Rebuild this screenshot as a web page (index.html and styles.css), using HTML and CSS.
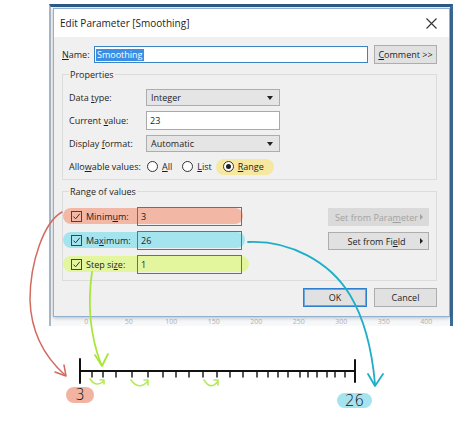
FILE: index.html
```html
<!DOCTYPE html>
<html>
<head>
<meta charset="utf-8">
<link rel="stylesheet" href="styles.css">
</head>
<body>
<div class="stage">
  <div class="appwin">
    <div class="axis">
      <span>0</span><span>50</span><span>100</span><span>150</span><span>200</span><span>250</span><span>300</span><span>350</span><span>400</span>
    </div>
  </div>

  <div class="dialog">
    <div class="titlebar">
      <span class="title">Edit Parameter [Smoothing]</span>
      <svg class="close" width="11" height="11" viewBox="0 0 11 11"><path d="M0.5 0.5 L10.5 10.5 M10.5 0.5 L0.5 10.5" stroke="#333" stroke-width="1.1" fill="none"/></svg>
    </div>
    <div class="body">
      <div class="name-row">
        <span class="name-label"><u>N</u>ame:</span>
        <div class="name-input"><span class="sel">Smoothing</span></div>
        <button class="btn comment"><span><u>C</u>omment &gt;&gt;</span></button>
      </div>

      <fieldset class="group props">
        <legend>Properties</legend>
        <div class="prow">
          <span class="plabel">Data <u>t</u>ype:</span>
          <div class="select"><span>Integer</span><span class="caret"></span></div>
        </div>
        <div class="prow">
          <span class="plabel">Current <u>v</u>alue:</span>
          <div class="textbox">23</div>
        </div>
        <div class="prow">
          <span class="plabel">Display <u>f</u>ormat:</span>
          <div class="select"><span>Automatic</span><span class="caret"></span></div>
        </div>
        <div class="prow">
          <span class="plabel">Allo<u>w</u>able values:</span>
          <div class="radios">
            <span class="radio r-all"><span class="dot"></span><span><u>A</u>ll</span></span>
            <span class="radio r-list"><span class="dot"></span><span><u>L</u>ist</span></span>
            <span class="radio r-range hl-yellow"><span class="dot on"></span><span><u>R</u>ange</span></span>
          </div>
        </div>
      </fieldset>

      <fieldset class="group range">
        <legend>Range of values</legend>
        <div class="range-body">
          <div class="rows">
            <div class="rrow">
              <div class="pill pill-min">
                <span class="check"><svg width="9" height="9" viewBox="0 0 9 9"><path d="M1.5 4.6 L3.6 6.8 L7.8 1.8" stroke="#333" stroke-width="1" fill="none"/></svg></span>
                <span class="rlabel">Minim<u>u</u>m:</span>
                <div class="rinput">3</div>
              </div>
            </div>
            <div class="rrow">
              <div class="pill pill-max">
                <span class="check"><svg width="9" height="9" viewBox="0 0 9 9"><path d="M1.5 4.6 L3.6 6.8 L7.8 1.8" stroke="#333" stroke-width="1" fill="none"/></svg></span>
                <span class="rlabel">Ma<u>x</u>imum:</span>
                <div class="rinput">26</div>
              </div>
            </div>
            <div class="rrow">
              <div class="pill pill-step">
                <span class="check"><svg width="9" height="9" viewBox="0 0 9 9"><path d="M1.5 4.6 L3.6 6.8 L7.8 1.8" stroke="#333" stroke-width="1" fill="none"/></svg></span>
                <span class="rlabel">Step si<u>z</u>e:</span>
                <div class="rinput">1</div>
              </div>
            </div>
          </div>
          <div class="side">
            <button class="btn side-btn disabled"><span class="txt">Set from Para<u>m</u>eter</span><span class="tri"></span></button>
            <button class="btn side-btn"><span class="txt">Set from Fi<u>e</u>ld</span><span class="tri"></span></button>
          </div>
        </div>
      </fieldset>

      <div class="footer">
        <button class="btn ok">OK</button>
        <button class="btn cancel">Cancel</button>
      </div>
    </div>
  </div>

  <svg class="annot" width="474" height="430" viewBox="0 0 474 430">
    <g fill="none" stroke-linecap="round" stroke-linejoin="round">
      <path d="M62 212 C44 222, 30 262, 30 300 C31 335, 46 358, 65 375" stroke="#d26a60" stroke-width="1.5"/>
      <path d="M55 372 L66 376 L64 365" stroke="#d26a60" stroke-width="1.5"/>
      <path d="M92 272 C88 300, 88 330, 101 364" stroke="#a8e63c" stroke-width="1.8"/>
      <path d="M95 355 L102 366 L108 354" stroke="#a8e63c" stroke-width="1.8"/>
      <path d="M248 242 C290 240, 330 262, 350 295 C365 320, 372 350, 375 384" stroke="#1faec8" stroke-width="1.8"/>
      <path d="M368 374 L375 386 L383 374" stroke="#1faec8" stroke-width="1.8"/>

      <path d="M80 371 H355" stroke="#111" stroke-width="2"/>
      <path d="M80 359 V383 M355 360 V382" stroke="#111" stroke-width="2"/>
      <path d="M92 371 v6 M103 371 v6 M116 371 v6 M132 371 v6 M148 371 v6 M163 371 v6 M176 371 v6 M189 371 v6 M203 371 v6 M217 371 v6 M230 371 v6 M243 371 v6 M257 371 v6 M268 371 v6 M278 371 v6 M288 371 v6 M300 371 v6 M308 371 v6 M317 371 v6 M327 371 v6 M335 371 v6 M345 371 v6" stroke="#111" stroke-width="1.4"/>

      <path d="M90 379 Q96 388 104 381 M100 380 L104 380 L104 384" stroke="#b5ea5a" stroke-width="1.6"/>
      <path d="M131 380 Q139 391 148 381 M144 380 L148 380 L148 385" stroke="#b5ea5a" stroke-width="1.6"/>
      <path d="M204 380 Q211 391 218 381 M214 380 L218 380 L218 385" stroke="#b5ea5a" stroke-width="1.6"/>
    </g>
  </svg>
  <span class="tag tag-min">3</span>
  <span class="tag tag-max">26</span>
</div>
</body>
</html>
```
FILE: styles.css
```css
* { box-sizing: border-box; }

body {
  margin: 0;
  background: #ffffff;
  font-family: "Open Sans", "Noto Sans", sans-serif;
}

.stage {
  position: relative;
  width: 474px;
  height: 430px;
  overflow: hidden;
}

/* window behind the dialog */
.appwin {
  position: absolute;
  left: 49px;
  top: 4px;
  width: 404px;
  height: 322px;
  background: #f7f8f9;
  border-top: 3px solid #2b5a86;
  border-right: 3px solid #3d6b98;
  border-left: 2px solid #a9b8c8;
  display: flex;
  flex-direction: column;
  justify-content: flex-end;
}

.axis {
  height: 8px;
  display: grid;
  grid-template-columns: repeat(9, 42.5px);
  padding-left: 14px;
  font-size: 7px;
  line-height: 8px;
  color: #b4b4b4;
  text-align: center;
}

/* dialog */
.dialog {
  position: absolute;
  left: 53px;
  top: 8px;
  width: 397px;
  height: 309px;
  background: #f0f0f0;
  border: 1px solid #8fb0d0;
  box-shadow: 0 1px 4px rgba(0, 0, 0, 0.25);
  display: flex;
  flex-direction: column;
  color: #1e1e1e;
  font-size: 9px;
}

.titlebar {
  height: 28px;
  flex: none;
  background: #ffffff;
  display: flex;
  align-items: center;
  justify-content: space-between;
  padding: 0 12px 0 6px;
  font-size: 10px;
  color: #222;
}

.close { display: block; }

.body {
  flex: 1;
  padding: 8px 12px 9px 8px;
  display: flex;
  flex-direction: column;
}

u { text-decoration: underline; text-underline-offset: 1px; }

.name-row {
  display: flex;
  align-items: center;
  height: 19px;
}

.name-label { width: 32px; }

.name-input {
  width: 274px;
  height: 17px;
  background: #fff;
  border: 1px solid #3b84c4;
  padding: 0 1px;
  display: flex;
  align-items: center;
}

.sel {
  background: #3a8ee6;
  color: #fff;
  line-height: 12px;
  padding: 0 1px;
}

.btn {
  font: inherit;
  font-size: 9px;
  color: #1e1e1e;
  background: #e1e1e1;
  border: 1px solid #adadad;
  padding: 0;
  margin: 0;
  display: flex;
  align-items: center;
  justify-content: center;
}

.comment {
  margin-left: 6px;
  width: 63px;
  height: 19px;
}

/* group boxes */
.group {
  margin: 4px 0 0;
  border: 1px solid #dcdcdc;
  min-width: 0;
}

.group legend {
  padding: 0 1px;
  font-size: 9px;
  line-height: 13px;
  color: #1e1e1e;
}

.props { padding: 5px 8px 1px 6px; }

.prow {
  display: flex;
  align-items: center;
  height: 23px;
}

.plabel { width: 77px; }

.select {
  width: 134px;
  height: 17px;
  background: #e5e5e5;
  border: 1px solid #adadad;
  display: flex;
  align-items: center;
  justify-content: space-between;
  padding: 0 6px 0 4px;
}

.caret {
  width: 0;
  height: 0;
  border-left: 3px solid transparent;
  border-right: 3px solid transparent;
  border-top: 4px solid #222;
}

.textbox {
  width: 134px;
  height: 19px;
  background: #fff;
  border: 1px solid #a9a9a9;
  display: flex;
  align-items: center;
  padding-left: 3px;
}

.radios {
  display: flex;
  align-items: center;
}

.radio {
  display: inline-flex;
  align-items: center;
  gap: 4px;
}

.r-all { margin-left: 1px; }
.r-list { margin-left: 10px; }
.r-range { margin-left: 4px; }

.hl-yellow {
  background: #f6e7a1;
  height: 16px;
  border-radius: 8px;
  padding: 0 10px 0 7px;
}

.dot {
  width: 11px;
  height: 11px;
  border: 1px solid #333;
  border-radius: 50%;
  background: #fff;
  display: flex;
  align-items: center;
  justify-content: center;
}

.dot.on::after {
  content: "";
  width: 5px;
  height: 5px;
  border-radius: 50%;
  background: #1e1e1e;
}

/* range of values */
.range {
  margin-top: 5px;
  padding: 6px 7px 4px 0;
}

.range legend { margin-left: 6px; }

.range-body {
  display: flex;
  justify-content: space-between;
}

.rows {
  display: flex;
  flex-direction: column;
}

.rrow {
  height: 24px;
  display: flex;
  align-items: center;
}

.pill {
  height: 16px;
  border-radius: 8px;
  display: flex;
  align-items: center;
  padding-left: 8px;
}

.pill-min { width: 180px; background: #f3b7a5; }
.pill-max { width: 182px; background: #a4e4ee; }
.pill-step { width: 186px; background: #e3f59d; }

.check {
  width: 11px;
  height: 11px;
  border: 1px solid #444;
  display: flex;
  align-items: center;
  justify-content: center;
}

.check svg { display: block; }

.rlabel {
  margin-left: 4px;
  width: 51px;
}

.rinput {
  width: 105px;
  height: 19px;
  border: 1px solid #6f6f6f;
  display: flex;
  align-items: center;
  padding-left: 3px;
  flex: none;
}

.side {
  display: flex;
  flex-direction: column;
  gap: 6px;
  padding-top: 4px;
}

.side-btn {
  width: 101px;
  height: 18px;
  justify-content: space-between;
  padding: 0 5px 0 4px;
}

.side-btn .txt {
  flex: 1;
  text-align: center;
}

.tri {
  width: 0;
  height: 0;
  border-top: 3px solid transparent;
  border-bottom: 3px solid transparent;
  border-left: 3px solid #222;
}

.side-btn.disabled {
  background: #dadada;
  border-color: #dadada;
  color: #a2a2a2;
}

.side-btn.disabled .tri { border-left-color: #a2a2a2; }

.footer {
  margin-top: 7px;
  display: flex;
  justify-content: flex-end;
  gap: 7px;
}

.ok {
  width: 64px;
  height: 19px;
  border: 1px solid #2f7fd0;
  box-shadow: inset 0 0 0 1px #6aa6e0;
}

.cancel {
  width: 63px;
  height: 19px;
}

/* annotations */
.annot {
  position: absolute;
  left: 0;
  top: 0;
  z-index: 5;
  pointer-events: none;
}

.tag {
  position: absolute;
  z-index: 6;
  display: flex;
  align-items: center;
  justify-content: center;
  font-family: "DejaVu Sans", sans-serif;
  font-weight: 200;
  font-size: 15px;
  color: #111;
  border-radius: 8px;
}

.tag-min {
  left: 66px;
  top: 387px;
  width: 28px;
  height: 16px;
  background: #f3b3a1;
}

.tag-max {
  left: 337px;
  top: 393px;
  width: 35px;
  height: 15px;
  background: #a5e3ef;
}
```
